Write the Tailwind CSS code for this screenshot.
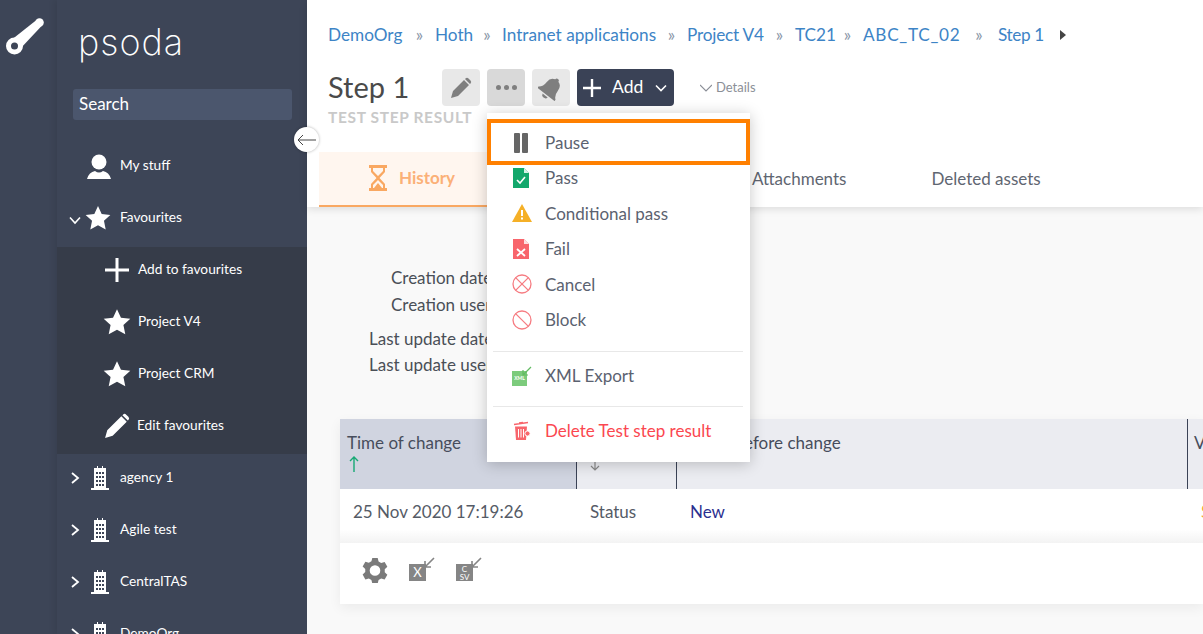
<!DOCTYPE html>
<html lang="en">
<head>
    <meta charset="UTF-8">
    <title>Psoda - Step 1</title>
    <script src="https://cdn.jsdelivr.net/npm/@tailwindcss/browser@4"></script>
</head>
<body class="h-[634px] w-[1203px] overflow-hidden bg-[#f9f9f9] font-['Lato','Liberation_Sans',sans-serif] text-[#555b66]">
<div class="relative flex h-[634px]">

    <!-- left rail + nav -->
    <aside class="flex h-full w-[307px] shrink-0 overflow-hidden bg-[#3d4557] text-white">
        <div class="w-[57px] shrink-0 pt-[16px] pl-[6px]">
            <svg width="40" height="40" viewBox="0 0 40 40">
                <path d="M4 25 L30.5 4 L36 9.5 L14 33Z" fill="#fff"/>
                <circle cx="33.5" cy="6.5" r="4.3" fill="#fff"/>
                <circle cx="8.5" cy="30" r="8.5" fill="#fff"/>
                <circle cx="8.5" cy="30" r="3.5" fill="#3d4557"/>
            </svg>
        </div>
        <div class="flex min-w-0 flex-1 flex-col shadow-[-3px_0_6px_rgba(0,0,0,0.08)]">
            <div class="h-[89px] shrink-0 pl-[21px] pt-[17px] font-['Inter',sans-serif] text-[36px] leading-[50px] font-extralight tracking-[1px]">psoda</div>
            <div class="mx-[16px] flex h-[31px] w-[219px] shrink-0 items-center rounded-[3px] bg-[#4b566d] px-[6px] pb-[2px] text-[17px]">Search</div>
            <nav class="mt-[20px] shrink-0 text-[13.7px]">
                <div class="flex h-[52px] items-center pl-[29px]">
                    <svg width="26" height="26" viewBox="0 0 26 26" fill="#fff"><circle cx="13" cy="9" r="7.5"/><path d="M1 26 Q3 19 9 18 Q13 21 17 18 Q23 19 25 26Z"/></svg>
                    <span class="-mt-[2px] ml-[8px]">My stuff</span>
                </div>
                <div class="flex h-[55px] items-center pb-[3px] pl-[11px]">
                    <svg width="14" height="14" viewBox="0 0 14 14" fill="none" stroke="#fff" stroke-width="1.6" class="mt-[3px]"><path d="M2 4.5 L7 10 L12 4.5"/></svg>
                    <svg width="26" height="26" viewBox="0 0 24 24" fill="#fff" class="ml-[3px]"><path d="M12 1 L15.4 8.3 L23.4 9.2 L17.5 14.6 L19.1 22.5 L12 18.6 L4.9 22.5 L6.5 14.6 L.6 9.2 L8.6 8.3Z"/></svg>
                    <span class="-mt-[2px] ml-[9px]">Favourites</span>
                </div>
                <div class="-mb-[2px] h-[207px] bg-[#363c49]">
                    <div class="flex h-[49px] items-center pb-[3px] pl-[47px]">
                        <svg width="26" height="26" viewBox="0 0 26 26" stroke="#fff" stroke-width="3"><path d="M13 1V25M1 13H25"/></svg>
                        <span class="-mt-[2px] ml-[8px]">Add to favourites</span>
                    </div>
                    <div class="flex h-[52px] items-center pl-[46px]">
                        <svg width="28" height="28" viewBox="0 0 24 24" fill="#fff"><path d="M12 1 L15.4 8.3 L23.4 9.2 L17.5 14.6 L19.1 22.5 L12 18.6 L4.9 22.5 L6.5 14.6 L.6 9.2 L8.6 8.3Z"/></svg>
                        <span class="-mt-[2px] ml-[7px]">Project V4</span>
                    </div>
                    <div class="flex h-[52px] items-center pl-[46px]">
                        <svg width="28" height="28" viewBox="0 0 24 24" fill="#fff"><path d="M12 1 L15.4 8.3 L23.4 9.2 L17.5 14.6 L19.1 22.5 L12 18.6 L4.9 22.5 L6.5 14.6 L.6 9.2 L8.6 8.3Z"/></svg>
                        <span class="-mt-[2px] ml-[7px]">Project CRM</span>
                    </div>
                    <div class="flex h-[52px] items-center pl-[47px]">
                        <svg width="26" height="26" viewBox="0 0 24 24" fill="#fff"><path d="M1 23 L3 16 L16 3 L21 8 L8 21Z M17.5 1.5 Q19 0 20.5 1.5 L22.5 3.5 Q24 5 22.5 6.5 L22 7 L17 2Z"/></svg>
                        <span class="-mt-[2px] ml-[7px]">Edit favourites</span>
                    </div>
                </div>
                <div class="flex h-[52px] items-center pl-[12px]">
                    <svg width="12" height="14" viewBox="0 0 12 14" fill="none" stroke="#fff" stroke-width="1.8"><path d="M3 2 L9 7 L3 12"/></svg>
                    <svg width="18" height="24" viewBox="0 0 18 24" fill="#fff" class="ml-[10px]"><path d="M6 0H7V2H11V0H12V2H15V22H18V24H0V22H3V2H6Z"/><path fill="#3d4557" d="M5 6h2v2H5zM8 6h2v2H8zM11 6h2v2h-2zM5 10h2v2H5zM8 10h2v2H8zM11 10h2v2h-2zM5 14h2v2H5zM8 14h2v2H8zM11 14h2v2h-2zM5 18h2v2H5zM8 18h2v2H8zM11 18h2v2h-2z"/></svg>
                    <span class="-mt-[2px] ml-[11px]">agency 1</span>
                </div>
                <div class="flex h-[52px] items-center pl-[12px]">
                    <svg width="12" height="14" viewBox="0 0 12 14" fill="none" stroke="#fff" stroke-width="1.8"><path d="M3 2 L9 7 L3 12"/></svg>
                    <svg width="18" height="24" viewBox="0 0 18 24" fill="#fff" class="ml-[10px]"><path d="M6 0H7V2H11V0H12V2H15V22H18V24H0V22H3V2H6Z"/><path fill="#3d4557" d="M5 6h2v2H5zM8 6h2v2H8zM11 6h2v2h-2zM5 10h2v2H5zM8 10h2v2H8zM11 10h2v2h-2zM5 14h2v2H5zM8 14h2v2H8zM11 14h2v2h-2zM5 18h2v2H5zM8 18h2v2H8zM11 18h2v2h-2z"/></svg>
                    <span class="-mt-[2px] ml-[11px]">Agile test</span>
                </div>
                <div class="flex h-[52px] items-center pl-[12px]">
                    <svg width="12" height="14" viewBox="0 0 12 14" fill="none" stroke="#fff" stroke-width="1.8"><path d="M3 2 L9 7 L3 12"/></svg>
                    <svg width="18" height="24" viewBox="0 0 18 24" fill="#fff" class="ml-[10px]"><path d="M6 0H7V2H11V0H12V2H15V22H18V24H0V22H3V2H6Z"/><path fill="#3d4557" d="M5 6h2v2H5zM8 6h2v2H8zM11 6h2v2h-2zM5 10h2v2H5zM8 10h2v2H8zM11 10h2v2h-2zM5 14h2v2H5zM8 14h2v2H8zM11 14h2v2h-2zM5 18h2v2H5zM8 18h2v2H8zM11 18h2v2h-2z"/></svg>
                    <span class="-mt-[2px] ml-[11px]">CentralTAS</span>
                </div>
                <div class="flex h-[52px] items-center pl-[12px]">
                    <svg width="12" height="14" viewBox="0 0 12 14" fill="none" stroke="#fff" stroke-width="1.8"><path d="M3 2 L9 7 L3 12"/></svg>
                    <svg width="18" height="24" viewBox="0 0 18 24" fill="#fff" class="ml-[10px]"><path d="M6 0H7V2H11V0H12V2H15V22H18V24H0V22H3V2H6Z"/><path fill="#3d4557" d="M5 6h2v2H5zM8 6h2v2H8zM11 6h2v2h-2zM5 10h2v2H5zM8 10h2v2H8zM11 10h2v2h-2zM5 14h2v2H5zM8 14h2v2H8zM11 14h2v2h-2zM5 18h2v2H5zM8 18h2v2H8zM11 18h2v2h-2z"/></svg>
                    <span class="-mt-[2px] ml-[11px]">DemoOrg</span>
                </div>
            </nav>
        </div>
    </aside>

    <!-- main -->
    <main class="min-w-0 flex-1">
        <header class="h-[207px] bg-white shadow-[0_2px_8px_rgba(0,0,0,0.12)]">
            <div class="flex h-[69px] items-center whitespace-nowrap pl-[21px] text-[17.2px] text-[#3d84c6]">
                <span class="w-[76px]">DemoOrg</span><span class="w-[31px] text-center text-[#8a97a8]">»</span>
                <span class="w-[37px]">Hoth</span><span class="w-[30px] text-center text-[#8a97a8]">»</span>
                <span class="w-[154px]">Intranet applications</span><span class="w-[31px] text-center text-[#8a97a8]">»</span>
                <span class="w-[77px] tracking-[-0.2px]">Project V4</span><span class="w-[31px] text-center text-[#8a97a8]">»</span>
                <span class="w-[37px]">TC21</span><span class="w-[31px] text-center text-[#8a97a8]">»</span>
                <span class="w-[97px] tracking-[0.7px]">ABC_TC_02</span><span class="w-[38px] text-center text-[#8a97a8]">»</span>
                <span class="w-[45px] tracking-[-0.4px]">Step 1</span>
                <svg width="8" height="10" viewBox="0 0 8 10" class="ml-[16px]"><path d="M1 0 L7 5 L1 10Z" fill="#444"/></svg>
            </div>
            <div class="flex pl-[21px]">
                <div class="w-[114px]">
                    <div class="text-[29px] leading-[36px] text-[#4a4a4a]">Step 1</div>
                    <div class="mt-[3px] text-[15.5px] leading-[18px] font-bold whitespace-nowrap tracking-[0.65px] text-[#c9c9c9]">TEST STEP RESULT</div>
                </div>
                <div class="flex h-[37px] gap-[7px]">
                    <div class="flex w-[38px] items-center justify-center rounded-[4px] bg-[#e8e8e8]">
                        <svg width="24" height="24" viewBox="0 0 24 24" fill="#7f7f7f"><path d="M2 22 L4 15 L15 4 L20 9 L9 20Z M16.5 2.5 Q18 1 19.5 2.5 L21.5 4.5 Q23 6 21.5 7.5 L21 8 L16 3Z"/></svg>
                    </div>
                    <div class="flex w-[38px] items-center justify-center gap-[3px] rounded-[4px] bg-[#d9d9d9]">
                        <span class="size-[5px] rounded-full bg-[#7f7f7f]"></span><span class="size-[5px] rounded-full bg-[#7f7f7f]"></span><span class="size-[5px] rounded-full bg-[#7f7f7f]"></span>
                    </div>
                    <div class="flex w-[38px] items-center justify-center rounded-[4px] bg-[#e8e8e8]">
                        <svg width="26" height="26" viewBox="0 0 24 24" fill="#7f7f7f"><g transform="rotate(38 12 12)"><path d="M12 1.5 Q13.8 1.5 13.8 3.3 Q18.5 4.5 18.5 10 Q18.5 15.5 22 18 V19.5 H2 V18 Q5.5 15.5 5.5 10 Q5.5 4.5 10.2 3.3 Q10.2 1.5 12 1.5Z"/><path d="M9 20.8 H15 Q14.5 23.2 12 23.2 Q9.5 23.2 9 20.8Z"/></g></svg>
                    </div>
                    <div class="flex w-[97px] items-center rounded-[4px] bg-[#3a4256] pl-[6px] text-[17.5px] text-white">
                        <svg width="18" height="18" viewBox="0 0 18 18" stroke="#fff" stroke-width="2.4"><path d="M9 0V18M0 9H18"/></svg>
                        <span class="ml-[11px]">Add</span>
                        <svg width="12" height="12" viewBox="0 0 12 12" fill="none" stroke="#fff" stroke-width="1.6" class="ml-[12px]"><path d="M1 3.5 L6 8.5 L11 3.5"/></svg>
                    </div>
                    <div class="ml-[19px] flex items-center text-[13px] text-[#8b8f97]">
                        <svg width="12" height="12" viewBox="0 0 12 12" fill="none" stroke="#8b8f97" stroke-width="1.2"><path d="M0 3 L6 9 L12 3"/></svg>
                        <span class="ml-[4px]">Details</span>
                    </div>
                </div>
            </div>
            <div class="mt-[26px] ml-[12px] flex h-[55px]">
                <div class="flex w-[168px] items-center justify-center gap-[12px] border-b-2 border-[#f9a862] bg-[#fff6ef] pb-[2px] pl-[18px] text-[17px] font-bold text-[#fbb077]">
                    <svg width="18" height="26" viewBox="0 0 18 26" fill="#f9a862"><path d="M0 0H18V3H16V7 L10.5 13 L16 19V23H18V26H0V23H2V19 L7.5 13 L2 7V3H0Z M4 3V6 L9 11 L14 6V3Z M4 23H14V20 L9 15 L4 20Z"/><path d="M5 23 L9 18 L13 23Z"/></svg>
                    <span>History</span>
                </div>
                <div class="flex flex-1 items-center pb-[2px] pl-[265px] text-[17px] text-[#5f6671]">
                    <span>Attachments</span>
                    <span class="ml-[85px]">Deleted assets</span>
                </div>
            </div>
        </header>

        <div class="mt-[57px] ml-[33px] h-[113px] pl-[51px] text-[17px] leading-[27px] text-[#4a4f57]">
            <div class="h-[62px]">Creation date<br>Creation user</div>
            <div class="-ml-[22px] leading-[26px]">Last update date<br>Last update user</div>
        </div>

        <section class="mt-[42px] ml-[33px] overflow-hidden shadow-[0_4px_12px_rgba(0,0,0,0.06)]">
            <div class="flex h-[70px] bg-[#ebecf1] text-[17px] text-[#474d5c]">
                <div class="w-[236px] shrink-0 bg-[#d0d4e0] pt-[11px] pl-[7px] leading-[25px]">
                    <div>Time of change</div>
                    <svg width="10" height="16" viewBox="0 0 10 16" fill="none" stroke="#16a974" stroke-width="1.4" class="mt-[1px] ml-[2px]"><path d="M5 16V1M1 5 L5 1 L9 5"/></svg>
                </div>
                <div class="w-[100px] shrink-0 border-l border-[#3a4256] pt-[11px] pl-[13px] leading-[25px]">
                    <div>Field</div>
                    <svg width="10" height="14" viewBox="0 0 10 14" fill="none" stroke="#8a8a8a" stroke-width="1.2" class="mt-[2px]"><path d="M5 0V13M1 9 L5 13 L9 9"/></svg>
                </div>
                <div class="w-[511px] shrink-0 border-l border-[#3a4256] pt-[11px] pl-[12px] leading-[25px]">Value before change</div>
                <div class="flex-1 border-l border-[#3a4256] pt-[11px] pl-[6px] leading-[25px]">V</div>
            </div>
            <div class="flex h-[54px] items-center bg-white bg-linear-to-b from-white from-75% to-[#f3f3f3] pb-[8px] text-[17px] text-[#555b66]">
                <div class="w-[236px] shrink-0 pl-[13px]">25 Nov 2020 17:19:26</div>
                <div class="w-[100px] shrink-0 pl-[14px]">Status</div>
                <div class="w-[511px] shrink-0 pl-[14px] text-[#2b2f8f]">New</div>
                <div class="flex-1 pl-[14px] text-[#f7a935]">S</div>
            </div>
            <div class="flex h-[61px] bg-white pt-[14px] pl-[22px]">
                <svg width="26" height="26" viewBox="0 0 24 24" fill="#7a7a7a"><path fill-rule="evenodd" d="M9.5 1h5l.8 3.2 2.4 1.4 3.2-.9 2.5 4.3-2.4 2.3v2.8l2.4 2.3-2.5 4.3-3.2-.9-2.4 1.4-.8 3.2h-5l-.8-3.2-2.4-1.4-3.2.9L.6 16.1 3 13.8V11L.6 8.7 3.1 4.4l3.2.9 2.4-1.4Z M12 7.5a4.9 4.9 0 1 0 0 9.8a4.9 4.9 0 1 0 0-9.8Z"/></svg>
                <div class="relative ml-[21px] h-[26px] w-[26px]">
                    <div class="absolute top-[7px] left-0 flex size-[17px] items-center justify-center bg-[#858585] text-[13px] text-white">X</div>
                    <svg width="13" height="13" viewBox="0 0 13 13" fill="none" stroke="#858585" stroke-width="1.6" class="absolute top-0 right-0"><path d="M12 1 L3 10M3 4V10H9"/></svg>
                </div>
                <div class="relative ml-[21px] h-[26px] w-[26px]">
                    <div class="absolute top-[7px] left-0 flex size-[17px] flex-col items-center justify-center bg-[#858585] text-[8px] leading-[8px] text-white"><span>C</span><span>SV</span></div>
                    <svg width="13" height="13" viewBox="0 0 13 13" fill="none" stroke="#858585" stroke-width="1.6" class="absolute top-0 right-0"><path d="M12 1 L3 10M3 4V10H9"/></svg>
                </div>
            </div>
        </section>
    </main>

    <!-- sidebar collapse button -->
    <div class="absolute top-[127px] left-[294px] flex size-[25px] items-center justify-center rounded-full bg-white shadow-[0_0_3px_rgba(0,0,0,0.3)]">
        <svg width="19" height="12" viewBox="0 0 19 12" fill="none" stroke="#444" stroke-width="1"><path d="M19 6H1M6 1 L1 6 L6 11"/></svg>
    </div>

    <!-- actions dropdown -->
    <div class="absolute top-[113px] left-[487px] w-[263px] bg-white pt-[6px] text-[17px] text-[#5b6270] shadow-[0_2px_14px_rgba(0,0,0,0.22)]">
        <div class="relative z-10 -mb-[5px] flex h-[46px] items-center border-[4px] border-[#ff8000] pt-[2px] pl-[22px]">
            <svg width="16" height="20" viewBox="0 0 16 20" fill="#666"><rect x="1" y="0" width="6" height="20" rx="1"/><rect x="9" y="0" width="6" height="20" rx="1"/></svg>
            <span class="ml-[16px]">Pause</span>
        </div>
        <div class="flex h-[35.5px] items-center pl-[26px]">
            <svg width="16" height="20" viewBox="0 0 16 20"><path d="M0 0H11L16 5V20H0Z" fill="#13a86c"/><path d="M11 0L16 5H11Z" fill="#d5f2e6"/><path d="M4 12 L7 15 L12 9" fill="none" stroke="#fff" stroke-width="1.6"/></svg>
            <span class="ml-[16px]">Pass</span>
        </div>
        <div class="flex h-[35.5px] items-center pl-[25px]">
            <svg width="20" height="18" viewBox="0 0 20 18"><path d="M10 0 L20 18H0Z" fill="#f5b027"/><path d="M9 6h2v6H9zM9 13.5h2v2H9z" fill="#fff"/></svg>
            <span class="ml-[13px]">Conditional pass</span>
        </div>
        <div class="flex h-[35.5px] items-center pl-[26px]">
            <svg width="16" height="20" viewBox="0 0 16 20"><path d="M0 0H11L16 5V20H0Z" fill="#f8656c"/><path d="M11 0L16 5H11Z" fill="#fde0e1"/><path d="M4 10 L12 17M12 10 L4 17" stroke="#fff" stroke-width="1.8"/></svg>
            <span class="ml-[16px]">Fail</span>
        </div>
        <div class="flex h-[35.5px] items-center pl-[25px]">
            <svg width="20" height="20" viewBox="0 0 20 20" fill="none" stroke="#f67c82" stroke-width="1.3"><circle cx="10" cy="10" r="9"/><path d="M3.6 3.6L16.4 16.4M16.4 3.6L3.6 16.4"/></svg>
            <span class="ml-[13px]">Cancel</span>
        </div>
        <div class="flex h-[35.5px] items-center pl-[25px]">
            <svg width="20" height="20" viewBox="0 0 20 20" fill="none" stroke="#f67c82" stroke-width="1.3"><circle cx="10" cy="10" r="9"/><path d="M3.6 3.6L16.4 16.4"/></svg>
            <span class="ml-[13px]">Block</span>
        </div>
        <div class="mt-[13px] mr-[7px] ml-[6px] border-t border-[#e8e8e8]"></div>
        <div class="flex h-[54px] items-center pb-[5px] pl-[25px]">
            <div class="relative h-[20px] w-[20px]">
                <div class="absolute bottom-0 left-0 flex size-[15px] items-center justify-center bg-[#7ccb7c] text-[5px] font-bold text-white">XML</div>
                <svg width="11" height="11" viewBox="0 0 11 11" fill="none" stroke="#62bb62" stroke-width="1.2" class="absolute top-0 right-0"><path d="M10 1 L2 9M2 4V9H7"/></svg>
            </div>
            <span class="ml-[13px]">XML Export</span>
        </div>
        <div class="mr-[7px] ml-[6px] border-t border-[#e8e8e8]"></div>
        <div class="flex h-[55px] items-center pb-[6px] pl-[26px] text-[#fb4750]">
            <svg width="18" height="20" viewBox="0 0 18 20"><path d="M1 3.5 L15 1.5M6 2 L10 1.5" stroke="#f8656c" stroke-width="1.4"/><path d="M2 5.5H14L13 19H3Z" fill="#f8656c"/><path d="M5.5 8V16.5M8 8V16.5M10.5 8V16.5" stroke="#fff" stroke-width="1"/><circle cx="14.5" cy="12.5" r="2.6" fill="#f8656c" stroke="#fff" stroke-width="1"/></svg>
            <span class="ml-[14px]">Delete Test step result</span>
        </div>
    </div>
</div>
</body>
</html>
